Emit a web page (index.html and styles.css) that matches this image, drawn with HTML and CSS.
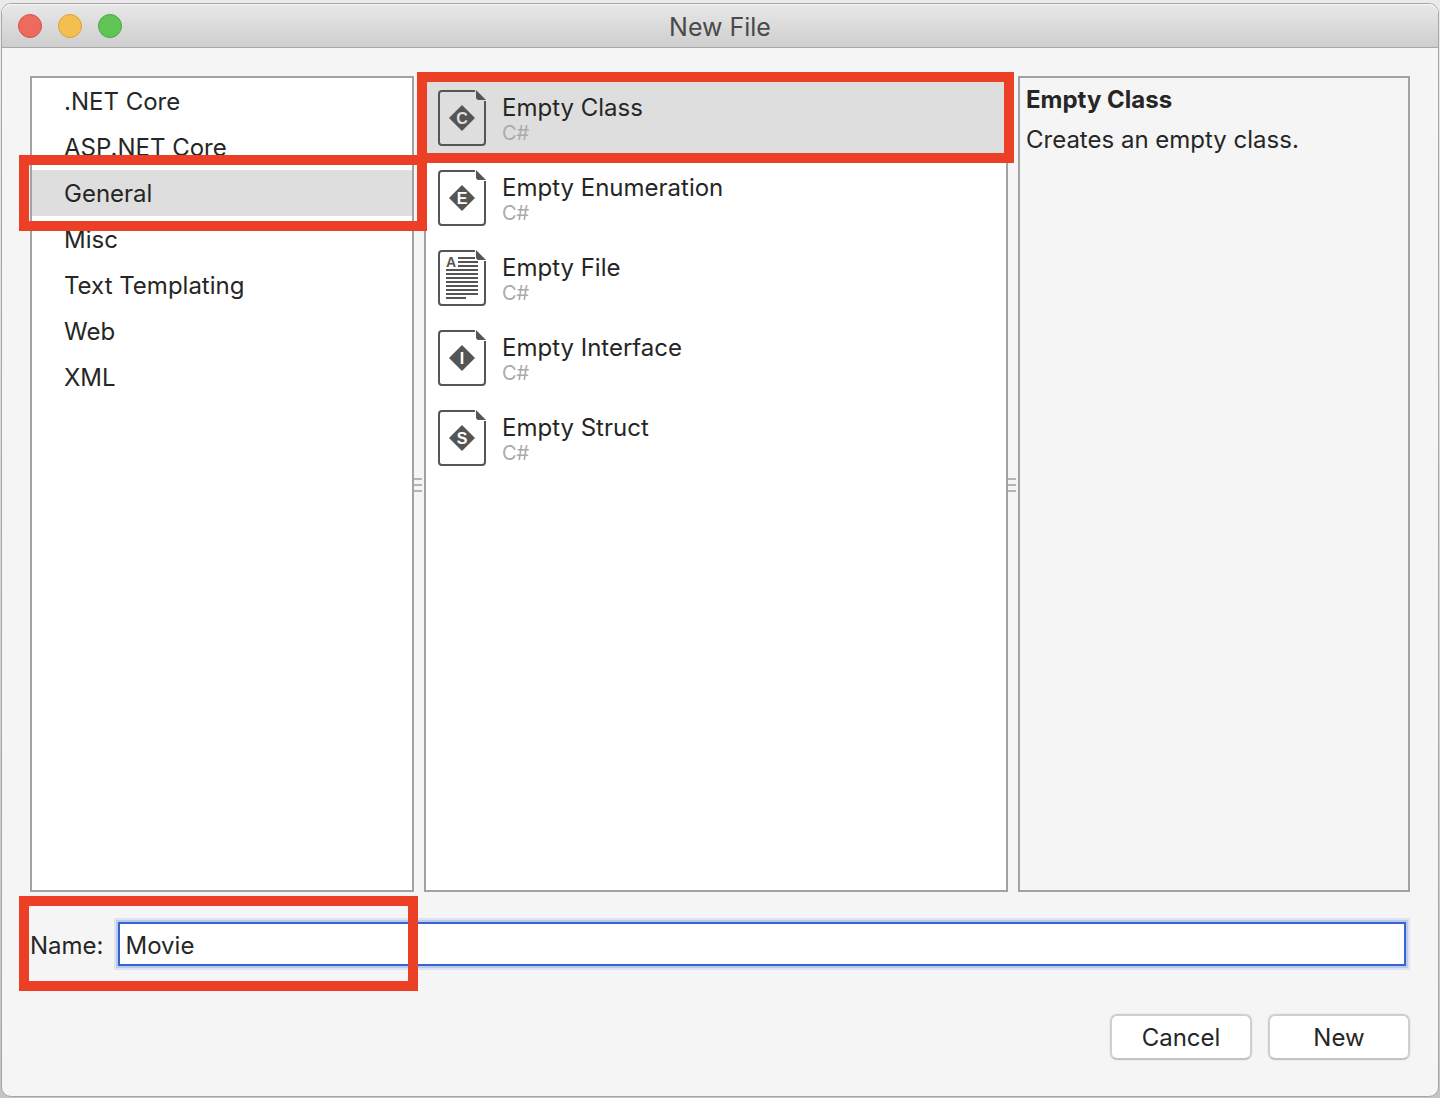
FILE: index.html
```html
<!DOCTYPE html>
<html lang="en">
<head>
  <meta charset="UTF-8">
  <meta name="viewport" content="width=device-width, initial-scale=1.0">
  <title>New File</title>
  <link rel="stylesheet" href="styles.css">
</head>
<body>
  <div class="window">
    <header class="titlebar">
      <div class="lights">
        <button type="button" class="light red" aria-label="Close"></button>
        <button type="button" class="light yellow" aria-label="Minimize"></button>
        <button type="button" class="light green" aria-label="Zoom"></button>
      </div>
      <h1>New File</h1>
    </header>

    <form class="content">
      <div class="panels">
        <ul class="panel categories">
          <li><button type="button">.NET Core</button></li>
          <li><button type="button">ASP.NET Core</button></li>
          <li class="selected marked"><button type="button">General</button></li>
          <li><button type="button">Misc</button></li>
          <li><button type="button">Text Templating</button></li>
          <li><button type="button">Web</button></li>
          <li><button type="button">XML</button></li>
        </ul>

        <div class="splitter"><i></i><i></i><i></i></div>

        <ul class="panel templates">
          <li class="selected marked">
            <button type="button">
              <svg class="icon" viewBox="0 0 48 56" aria-hidden="true">
                <path class="page" d="M37 1H4Q1 1 1 4V52Q1 55 4 55H44Q47 55 47 52V11" />
                <path d="M38 0L48 10H41Q38 10 38 7Z" />
                <path d="M24 15L37 28L24 41L11 28Z" />
                <text class="letter" x="24" y="34">C</text>
              </svg>
              <span class="label"><span class="name">Empty Class</span><span class="lang">C#</span></span>
            </button>
          </li>
          <li>
            <button type="button">
              <svg class="icon" viewBox="0 0 48 56" aria-hidden="true">
                <path class="page" d="M37 1H4Q1 1 1 4V52Q1 55 4 55H44Q47 55 47 52V11" />
                <path d="M38 0L48 10H41Q38 10 38 7Z" />
                <path d="M24 15L37 28L24 41L11 28Z" />
                <text class="letter" x="24" y="34">E</text>
              </svg>
              <span class="label"><span class="name">Empty Enumeration</span><span class="lang">C#</span></span>
            </button>
          </li>
          <li>
            <button type="button">
              <svg class="icon" viewBox="0 0 48 56" aria-hidden="true">
                <path class="page" d="M37 1H4Q1 1 1 4V52Q1 55 4 55H44Q47 55 47 52V11" />
                <path d="M38 0L48 10H41Q38 10 38 7Z" />
                <path class="lines" d="M20 8H37M20 12H40M20 16H40M8 20H40M8 24H40M8 28H40M8 32H40M8 36H40M8 40H40M8 44H40M8 48H28" />
                <text class="initial" x="13" y="17">A</text>
              </svg>
              <span class="label"><span class="name">Empty File</span><span class="lang">C#</span></span>
            </button>
          </li>
          <li>
            <button type="button">
              <svg class="icon" viewBox="0 0 48 56" aria-hidden="true">
                <path class="page" d="M37 1H4Q1 1 1 4V52Q1 55 4 55H44Q47 55 47 52V11" />
                <path d="M38 0L48 10H41Q38 10 38 7Z" />
                <path d="M24 15L37 28L24 41L11 28Z" />
                <text class="letter" x="24" y="34">I</text>
              </svg>
              <span class="label"><span class="name">Empty Interface</span><span class="lang">C#</span></span>
            </button>
          </li>
          <li>
            <button type="button">
              <svg class="icon" viewBox="0 0 48 56" aria-hidden="true">
                <path class="page" d="M37 1H4Q1 1 1 4V52Q1 55 4 55H44Q47 55 47 52V11" />
                <path d="M38 0L48 10H41Q38 10 38 7Z" />
                <path d="M24 15L37 28L24 41L11 28Z" />
                <text class="letter" x="24" y="34">S</text>
              </svg>
              <span class="label"><span class="name">Empty Struct</span><span class="lang">C#</span></span>
            </button>
          </li>
        </ul>

        <div class="splitter"><i></i><i></i><i></i></div>

        <section class="panel details">
          <h2>Empty Class</h2>
          <p>Creates an empty class.</p>
        </section>
      </div>

      <div class="name-row marked">
        <label for="name">Name:</label>
        <input type="text" id="name" value="Movie">
      </div>

      <div class="actions">
        <button type="button">Cancel</button>
        <button type="submit">New</button>
      </div>
    </form>
  </div>
</body>
</html>
```
FILE: styles.css
```css
*, *::after {
  box-sizing: border-box;
}
body {
  margin: 0;
  padding: 3px 1px 1px;
  min-height: 100vh;
  display: flex;
  background: linear-gradient(#ebebeb, #c4c4c4);
  font-family: Inter, "Liberation Sans", sans-serif;
  font-size: 24px;
  line-height: 30px;
  color: #262626;
}
h1, h2, p, ul {
  margin: 0;
  padding: 0;
}
ul {
  list-style: none;
}
button, input {
  font: inherit;
  color: inherit;
}
.window {
  flex: 1;
  display: flex;
  flex-direction: column;
  border: 1px solid #a6a6a6;
  border-radius: 10px;
  background: #f5f5f5;
}

/* title bar */
.titlebar {
  position: relative;
  height: 44px;
  display: flex;
  align-items: center;
  justify-content: center;
  padding-top: 2px;
  border-bottom: 1px solid #a8a8a8;
  border-radius: 9px 9px 0 0;
  background: linear-gradient(#e8e8e8, #cecece);
  box-shadow: inset 0 1px #f5f5f5;
}
.titlebar h1 {
  font-size: 25px;
  font-weight: 400;
  color: #4a4a4a;
}
.lights {
  position: absolute;
  left: 16px;
  top: 10px;
  display: flex;
  gap: 16px;
}
.light {
  width: 24px;
  height: 24px;
  padding: 0;
  border: 1px solid;
  border-radius: 50%;
}
.red {
  background: #ec6a5e;
  border-color: #d8514a;
}
.yellow {
  background: #f5bf4f;
  border-color: #d9a13c;
}
.green {
  background: #61c555;
  border-color: #4ba73d;
}

/* panels */
.content {
  flex: 1;
  display: flex;
  flex-direction: column;
  padding: 28px 28px 36px;
}
.panels {
  flex: 1;
  display: grid;
  grid-template-columns: 384px 10px 1fr 10px 392px;
}
.panel {
  border: 2px solid #a2a2a2;
  background: #fff;
}
.panel button {
  display: flex;
  align-items: center;
  width: 100%;
  border: 0;
  background: none;
  text-align: left;
}
.selected {
  background: #dedede;
}
.categories button {
  height: 46px;
  padding: 2px 32px 0;
}
.templates button {
  height: 80px;
  padding: 0 12px;
  gap: 16px;
}
.icon {
  width: 48px;
  height: 56px;
  fill: #555;
}
.page, .lines {
  fill: none;
  stroke: #555;
  stroke-width: 2;
}
.letter, .initial {
  font-family: "Liberation Sans", sans-serif;
  font-size: 16px;
  font-weight: 700;
  text-anchor: middle;
}
.letter {
  fill: #fff;
}
.selected .letter {
  fill: #dedede;
}
.initial {
  font-size: 14px;
}
.label {
  display: flex;
  flex-direction: column;
}
.lang {
  font-size: 20px;
  line-height: 20px;
  color: #aaa;
}
.splitter {
  display: flex;
  flex-direction: column;
  justify-content: center;
  gap: 4px;
  padding-top: 2px;
}
.splitter i {
  width: 8px;
  height: 2px;
  background: #b4b4b4;
}
.details {
  padding: 7px 6px;
  background: #f5f5f5;
}
.details h2 {
  margin-bottom: 10px;
  font-size: 24px;
  font-weight: 700;
}

/* name and buttons */
.name-row {
  display: flex;
  align-items: center;
  gap: 14px;
  margin-top: 30px;
  padding-right: 4px;
}
.name-row label {
  padding-top: 3px;
}
.name-row input {
  flex: 1;
  min-width: 0;
  height: 44px;
  padding: 2px 6px 0;
  border: 2px solid #3563d3;
  background: #fff;
  outline: none;
  box-shadow: 0 0 0 2px #bccaeb, 0 0 0 4px #dde3f1;
}
.actions {
  display: flex;
  justify-content: flex-end;
  gap: 16px;
  margin-top: 48px;
}
.actions button {
  width: 142px;
  height: 46px;
  padding: 2px 0 0;
  border: 2px solid #cfcfcf;
  border-bottom-color: #c2c2c2;
  border-radius: 7px;
  background: #fff;
  box-shadow: 0 0 0 1px #ededed;
}

/* red call-out frames */
.marked {
  position: relative;
}
.marked::after {
  content: "";
  position: absolute;
  z-index: 1;
  border: 10px solid #ec4026;
  pointer-events: none;
}
.categories .marked::after {
  inset: -15px -15px -15px -13px;
}
.templates .marked::after {
  inset: -6px -8px -5px -9px;
}
.name-row.marked::after {
  inset: -26px auto -25px -11px;
  width: 399px;
}
```
